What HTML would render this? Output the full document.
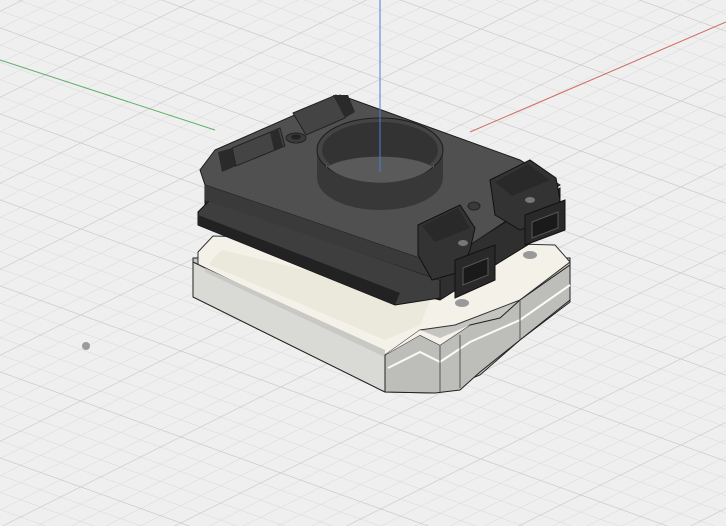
<!DOCTYPE html>
<html><head><meta charset="utf-8"><style>html,body{margin:0;padding:0;background:#efefef;overflow:hidden}svg{display:block}</style></head>
<body>
<svg width="726" height="526" viewBox="0 0 726 526" xmlns="http://www.w3.org/2000/svg">
<defs>
<pattern id="g" width="20" height="20" patternUnits="userSpaceOnUse" patternTransform="matrix(1,0.36,1,-0.5,380,165)">
<path d="M0 0H20M0 0V20" stroke="#d6d6d6" stroke-width="1.1" fill="none"/>
</pattern>
<pattern id="G" width="100" height="100" patternUnits="userSpaceOnUse" patternTransform="matrix(1,0.36,1,-0.5,380,165)">
<path d="M0 0H100M0 0V100" stroke="#cacaca" stroke-width="1.5" fill="none"/>
</pattern>
</defs>
<rect width="726" height="526" fill="#efefef"/>
<rect width="726" height="526" fill="url(#g)"/>
<rect width="726" height="526" fill="url(#G)"/>
<line x1="0" y1="60" x2="215" y2="130" stroke="#5fae6a" stroke-width="1"/>
<line x1="470" y1="132" x2="726" y2="22" stroke="#d06a63" stroke-width="1"/>
<circle cx="86" cy="346" r="4" fill="#9a9a9a"/>

<!-- white base -->
<polygon points="193,258 193,297 385,392 435,393 480,375 520,340 570,302 570,258" fill="#c4c4c0" stroke="#222" stroke-width="1"/>
<polygon points="198,252 213,236 555,245 570,262 520,300 455,325 420,330 385,355 198,268" fill="#f3f1e8" stroke="#333" stroke-width="1"/>
<polygon points="210,262 222,250 430,300 420,325 385,340 210,265" fill="#ebe8dc"/>
<polygon points="193,262 385,355 385,392 193,297" fill="#d9d9d6" stroke="#222" stroke-width="1"/>
<polygon points="205,268 385,350 385,357 205,272" fill="#c8c8c4"/>
<polygon points="385,355 420,335 440,345 470,325 500,318 520,300 570,265 570,300 520,340 480,372 460,390 435,393 385,392" fill="#bdbdb9" stroke="#222" stroke-width="1"/>
<polygon points="385,355 420,335 440,345 470,325 440,338 420,330" fill="#f3f1e8"/>
<path d="M388,368 L420,352 L440,362 L470,342 L520,320 L570,285" stroke="#fafafa" stroke-width="2" fill="none"/>
<line x1="440" y1="345" x2="440" y2="392" stroke="#555"/>
<line x1="460" y1="335" x2="460" y2="388" stroke="#555"/>
<line x1="520" y1="300" x2="520" y2="340" stroke="#555"/>
<ellipse cx="462" cy="303" rx="7" ry="4" fill="#999"/>
<ellipse cx="530" cy="255" rx="7" ry="4" fill="#999"/>

<!-- black body -->
<polygon points="205,168 205,210 400,290 440,300 500,262 560,225 560,188 440,263" fill="#2f2f2f" stroke="#111"/>
<polygon points="198,212 198,225 395,305 440,298 440,280 210,200" fill="#3e3e3e" stroke="#111"/>
<polygon points="198,225 395,305 400,293 198,215" fill="#222"/>
<polygon points="215,150 340,95 520,160 560,185 440,265 205,185 200,170" fill="#505050" stroke="#1c1c1c"/>
<polygon points="205,185 440,265 440,280 205,200" fill="#3a3a3a"/>
<!-- left ribs -->
<polygon points="218,152 232,148 236,166 222,172" fill="#2a2a2a"/>
<polygon points="232,148 280,128 285,146 236,166" fill="#444" stroke="#222"/>
<polygon points="270,132 278,128 283,146 274,150" fill="#2a2a2a"/>
<polygon points="293,113 336,95 348,100 345,118 306,135" fill="#444" stroke="#222"/>
<polygon points="333,95 348,95 355,112 345,118" fill="#2a2a2a"/>
<ellipse cx="296" cy="138" rx="10" ry="5" fill="#3a3a3a" stroke="#222"/>
<ellipse cx="296" cy="137" rx="5" ry="2.5" fill="#222"/>
<!-- cylinder -->
<path d="M317,150 L317,178 A63,32 0 0 0 443,178 L443,150 Z" fill="#383838"/>
<ellipse cx="380" cy="150" rx="63" ry="32" fill="#444" stroke="#1d1d1d"/>
<ellipse cx="380" cy="150" rx="58" ry="28" fill="#333"/>
<path d="M326,165 A58,28 0 0 0 434,165 L434,168 A58,18 0 0 0 326,168 Z" fill="#5a5a5a"/>
<line x1="380" y1="0" x2="380" y2="172" stroke="#4a7fd6" stroke-width="1"/>
<!-- right clips -->
<polygon points="418,225 460,205 475,228 470,250 460,272 432,280 418,255" fill="#333" stroke="#111"/>
<polygon points="422,226 458,208 470,228 435,242" fill="#292929"/>
<ellipse cx="463" cy="243" rx="5" ry="3" fill="#777"/>
<polygon points="490,180 530,160 556,178 560,200 555,218 520,230 495,215" fill="#333" stroke="#111"/>
<polygon points="495,182 528,164 550,180 512,196" fill="#292929"/>
<ellipse cx="530" cy="200" rx="5" ry="3" fill="#777"/>
<polygon points="455,260 495,245 495,280 455,298" fill="#292929" stroke="#111"/>
<polygon points="463,268 488,258 488,275 463,285" fill="#1a1a1a" stroke="#555"/>
<polygon points="525,215 565,200 565,230 525,245" fill="#292929" stroke="#111"/>
<polygon points="532,222 558,212 558,228 532,238" fill="#1a1a1a" stroke="#555"/>
<ellipse cx="474" cy="206" rx="6" ry="4" fill="#3a3a3a" stroke="#222"/>
</svg>
</body></html>
